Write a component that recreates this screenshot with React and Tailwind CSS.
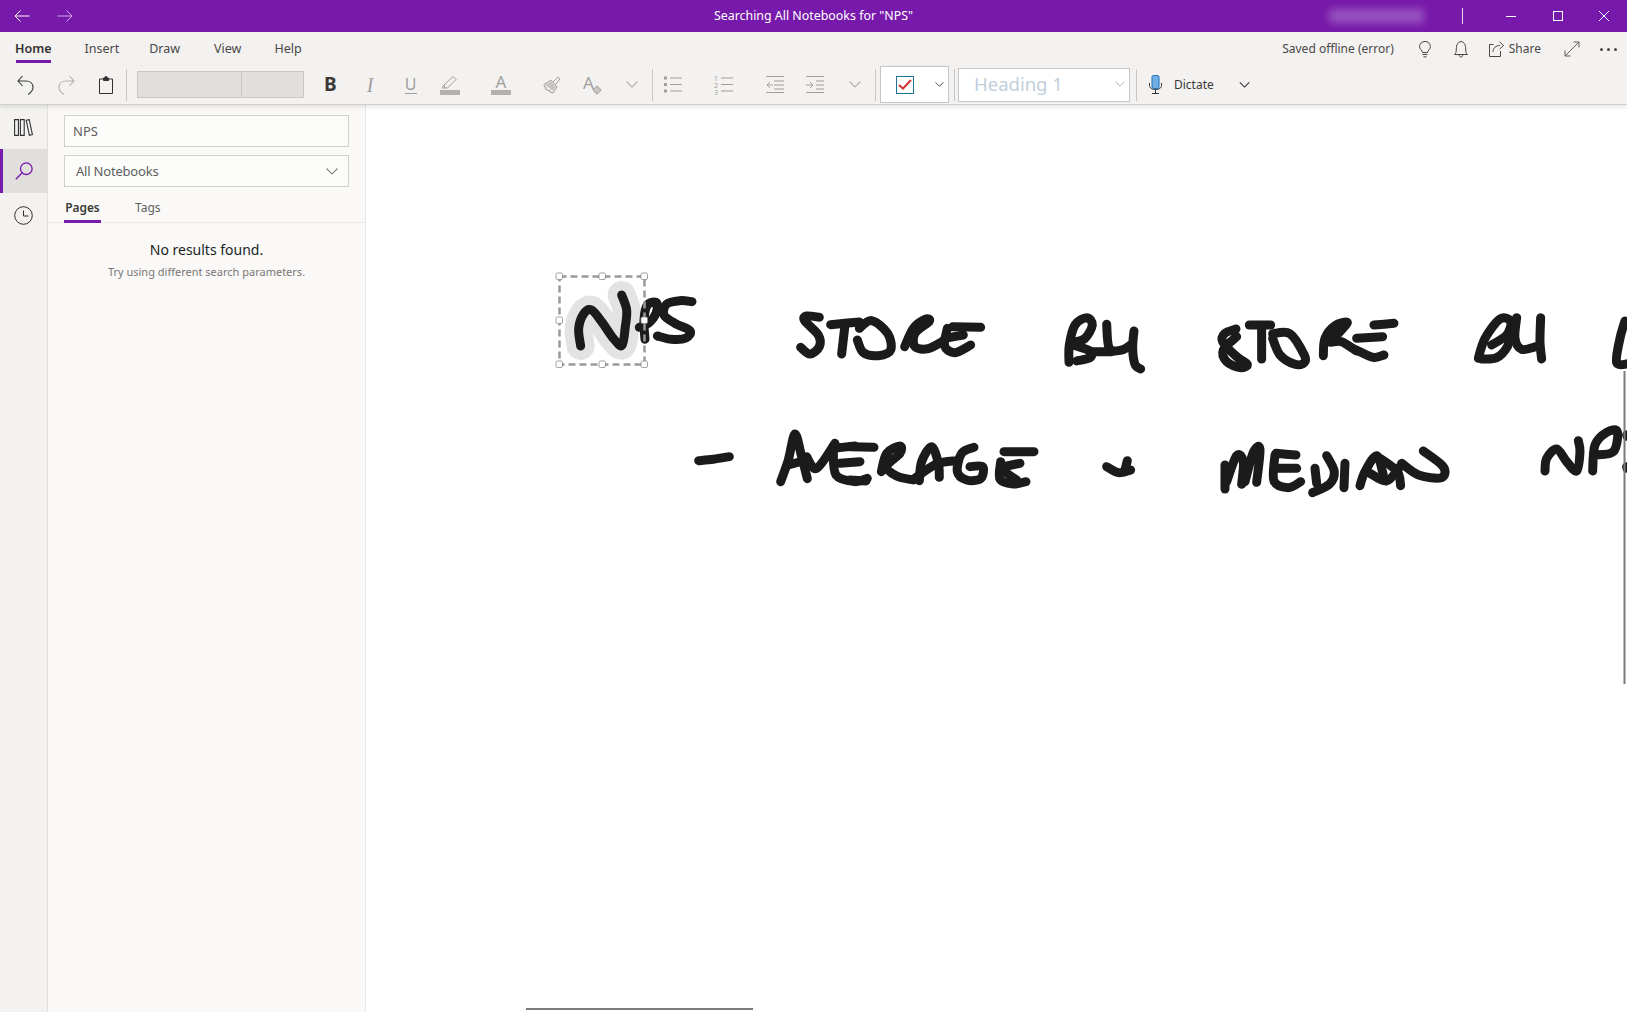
import React from 'react';

// pen stroke through a list of points (catmull-rom)
const smooth = (pts) => {
    let d = `M${pts[0][0]} ${pts[0][1]}`;
    for (let i = 0; i < pts.length - 1; i++) {
        const p0 = pts[i - 1] || pts[i];
        const p1 = pts[i];
        const p2 = pts[i + 1];
        const p3 = pts[i + 2] || p2;
        d += ` C${p1[0] + (p2[0] - p0[0]) / 6} ${p1[1] + (p2[1] - p0[1]) / 6} ${p2[0] - (p3[0] - p1[0]) / 6} ${p2[1] - (p3[1] - p1[1]) / 6} ${p2[0]} ${p2[1]}`;
    }
    return d;
};

const nStroke = [[122, 258], [116, 205], [132, 160], [155, 150], [185, 185], [220, 235], [246, 256], [256, 200], [260, 150], [245, 105]];

// ink groups are traced at 3x, from the given page origin
const inkGroups = [
    {
        x: 540, y: 260, w: 27,
        strokes: [
            nStroke,
            // P
            [[315, 238], [312, 180], [322, 135], [350, 128], [348, 160], [325, 190], [298, 202]],
            // S
            [[456, 125], [420, 122], [380, 132], [372, 165], [405, 190], [450, 212], [438, 234], [395, 238], [352, 228]],
            // STORE
            [[838, 172], [800, 168], [794, 182], [835, 225], [838, 260], [810, 282], [782, 262]],
            [[872, 194], [958, 186]],
            [[915, 195], [905, 282]],
            // dash
            [[476, 602], [520, 598], [568, 590]],
            // AVE
            [[722, 665], [745, 600], [765, 522], [785, 590], [802, 656]],
            [[745, 615], [800, 600]],
            [[800, 590], [830, 625], [885, 550]],
            [[880, 565], [945, 558]],
            [[880, 570], [888, 645], [945, 665], [982, 655]],
            [[900, 610], [960, 605]],
        ],
    },
    {
        x: 850, y: 290, w: 27,
        strokes: [
            // ORE
            [[28, 115], [65, 92], [113, 130], [122, 180], [85, 197], [40, 188], [22, 150]],
            [[164, 170], [190, 115], [225, 88], [238, 94], [195, 130], [195, 170], [235, 176], [285, 150]],
            [[308, 110], [392, 112]],
            [[292, 115], [284, 168], [315, 188], [362, 165]],
            [[285, 145], [340, 135]],
            // RAGE
            [[0, 470], [72, 472]],
            [[0, 570], [48, 573]],
            [[94, 545], [110, 490], [150, 468], [150, 490], [110, 530], [140, 558], [190, 570]],
            [[208, 572], [215, 515], [245, 470], [265, 520], [268, 562]],
            [[190, 568], [260, 522], [320, 512]],
            [[372, 472], [335, 490], [322, 545], [350, 570], [392, 566], [398, 530], [360, 530]],
            [[462, 485], [552, 485]],
            [[452, 515], [450, 568], [490, 582], [528, 575]],
            [[460, 530], [510, 520]],
            [[470, 550], [500, 570]],
        ],
    },
    {
        x: 1040, y: 295, w: 27,
        strokes: [
            // BY
            [[87, 202], [88, 150], [105, 90], [140, 68], [157, 90], [135, 130], [100, 142]],
            [[100, 150], [150, 168], [150, 188], [110, 198]],
            [[150, 170], [215, 170]],
            [[200, 88], [208, 160], [245, 165], [272, 150]],
            [[282, 108], [278, 160], [285, 208], [302, 222]],
            // STORE
            [[588, 102], [555, 115], [548, 140], [590, 185], [622, 208], [600, 218], [560, 200], [550, 165], [590, 125]],
            [[628, 90], [692, 90]],
            [[665, 95], [665, 192]],
            [[698, 116], [750, 116], [793, 180], [793, 203], [765, 208], [720, 180], [698, 130]],
            [[850, 182], [855, 130], [885, 92], [922, 82], [900, 110], [870, 140], [905, 140], [950, 168]],
            [[1002, 90], [1062, 85]],
            [[950, 130], [1028, 125]],
            [[950, 165], [1000, 187], [1032, 180]],
            // plus
            [[200, 515], [235, 533], [272, 525]],
            [[262, 497], [255, 525]],
            // MEDIAN
            [[555, 510], [555, 582]],
            [[560, 560], [590, 482], [610, 500], [605, 568]],
            [[615, 560], [640, 472], [660, 462], [650, 562]],
            [[708, 475], [768, 480]],
            [[705, 480], [702, 558], [745, 578], [782, 560]],
            [[710, 520], [770, 520]],
            [[825, 520], [830, 565]],
            [[860, 482], [883, 530], [868, 568], [818, 593]],
            [[915, 505], [912, 578]],
            [[960, 572], [975, 530], [1010, 482], [1030, 540]],
            [[1082, 572], [1072, 530], [1020, 490]],
            [[990, 535], [1040, 558], [1080, 515]],
            [[1150, 468], [1210, 515], [1204, 548], [1136, 540], [1085, 505]],
        ],
    },
    {
        x: 1400, y: 295, w: 27,
        strokes: [
            [[235, 190], [255, 130], [300, 72], [332, 80], [320, 120], [275, 150]],
            [[245, 192], [290, 188], [322, 155], [330, 120]],
            [[350, 68], [345, 130], [365, 163], [408, 155]],
            [[422, 68], [420, 140], [425, 192]],
            [[675, 78], [660, 130], [650, 203], [685, 206]],
            // NP
            [[435, 528], [440, 490], [470, 462], [500, 500], [530, 528], [540, 470], [535, 437]],
            [[578, 528], [585, 450], [620, 412], [652, 410], [640, 470], [585, 480]],
            [[680, 420], [681, 424]],
            [[680, 515], [681, 520]],
        ],
    },
];

const handles = [[559, 276], [602, 276], [644, 276], [559, 320], [644, 320], [559, 364], [602, 364], [644, 364]];

const Chevron = ({ className, color = '#a19f9d' }) => (
    <svg viewBox="0 0 12 7" className={className} fill="none" stroke={color} strokeWidth="1.2">
        <path d="M.5 .5 6 6l5.500-5.500" />
    </svg>
);

const Divider = ({ className }) => <div className={`w-px h-[32px] bg-[#c8c6c4] ${className}`} />;

const RibbonTab = ({ label, active, className }) => (
    <div className={`relative h-full flex items-center ${className}`}>
        <span className={`text-[12.5px] ${active ? 'font-semibold text-[#323130]' : 'text-[#4a4846]'}`}>{label}</span>
        {active && <div className="absolute left-px right-0 bottom-[3px] h-[3px] bg-[#7719aa]" />}
    </div>
);

const ColorBar = ({ className }) => <div className={`absolute left-0 bottom-0 w-[20px] h-[5px] bg-[#b3b0ad] ${className}`} />;

const App = () => {
    return (
        <div className="flex flex-col w-full h-screen overflow-hidden bg-white font-['Noto_Sans',sans-serif]">
            {/* Title bar */}
            <div className="grid grid-cols-[1fr_auto_1fr] items-center h-[32px] bg-[#7719aa] shrink-0 text-white">
                <div className="flex items-center pl-[14px]">
                    <svg viewBox="0 0 16 12" className="w-[16px] h-[12px]" fill="none" stroke="#fff" strokeWidth="1">
                        <path d="M15.500 6H1M6.500.5 1 6l5.500 5.500" />
                    </svg>
                    <svg viewBox="0 0 16 12" className="w-[16px] h-[12px] ml-[27px]" fill="none" stroke="#cfa8e3" strokeWidth="1">
                        <path d="M.5 6H15M9.500.5 15 6l-5.500 5.500" />
                    </svg>
                </div>
                <div className="text-[12.4px]">Searching All Notebooks for "NPS"</div>
                <div className="flex items-center justify-end">
                    <div className="w-[95px] h-[14px] bg-white/25 blur-[4px] mr-[38px]" />
                    <div className="w-px h-[16px] bg-[#e7d6f0] mr-[43px]" />
                    <div className="w-[10px] h-px bg-white mr-[37px]" />
                    <div className="w-[10px] h-[10px] border border-white mr-[36px]" />
                    <svg viewBox="0 0 10 10" className="w-[10px] h-[10px] mr-[18px]" fill="none" stroke="#fff" strokeWidth="1">
                        <path d="M0 0l10 10M10 0 0 10" />
                    </svg>
                </div>
            </div>

            {/* Ribbon tabs */}
            <div className="flex items-center h-[34px] bg-[#f3f2f1] shrink-0 text-[#4a4846]">
                <RibbonTab label="Home" active className="ml-[15px]" />
                <RibbonTab label="Insert" className="ml-[33px]" />
                <RibbonTab label="Draw" className="ml-[30px]" />
                <RibbonTab label="View" className="ml-[34px]" />
                <RibbonTab label="Help" className="ml-[33px]" />
                <div className="flex items-center ml-auto">
                    <span className="text-[12px]">Saved offline (error)</span>
                    <svg viewBox="0 0 12 17" className="w-[12px] h-[17px] ml-[25px]" fill="none" stroke="#4a4846" strokeWidth="1">
                        <path d="M3.500 11.500C3 9 .6 8.400.6 5.600a5.400 5.200 0 0 1 10.800 0c0 2.800-2.400 3.400-2.900 5.900zM3.500 13.500h5M4.500 15.800h3" />
                    </svg>
                    <svg viewBox="0 0 14 17" className="w-[14px] h-[17px] ml-[23px]" fill="none" stroke="#4a4846" strokeWidth="1">
                        <path d="M.5 13.500c1.200-1 1.800-2 1.800-5.500C2.300 3.500 4.200.6 7 .6s4.700 2.900 4.700 7.400c0 3.500.6 4.500 1.800 5.500zM5.200 13.800c0 3 3.600 3 3.600 0" />
                    </svg>
                    <svg viewBox="0 0 15 16" className="w-[15px] h-[16px] ml-[21px]" fill="none" stroke="#4a4846" strokeWidth="1">
                        <path d="M4.500 3.500H.5v12h11V10M4 11c0-4 3-6.500 7-6.500M10.500.8 14.500 4.500l-4 3.700" />
                    </svg>
                    <span className="text-[12px] ml-[5px]">Share</span>
                    <svg viewBox="0 0 16 16" className="w-[16px] h-[16px] ml-[23px]" fill="none" stroke="#605e5c" strokeWidth="1">
                        <path d="M1 15 15 1M9.500 1H15v5.500M1 9.500V15h5.500" />
                    </svg>
                    <div className="flex gap-[4px] ml-[20px] mr-[10px]">
                        <div className="w-[3px] h-[3px] rounded-full bg-[#4a4846]" />
                        <div className="w-[3px] h-[3px] rounded-full bg-[#4a4846]" />
                        <div className="w-[3px] h-[3px] rounded-full bg-[#4a4846]" />
                    </div>
                </div>
            </div>

            {/* Toolbar */}
            <div className="relative z-10 flex items-center h-[39px] pl-[17px] pb-px bg-[#f3f2f1] shrink-0 border-b border-[#d2d0ce] shadow-[0_2px_4px_rgba(0,0,0,0.10)]">
                <svg viewBox="0 0 17 20" className="w-[17px] h-[20px]" fill="none" stroke="#3b3a39" strokeWidth="1.1">
                    <path d="M5.500 1 1 6l4.500 5M1 6h8c4 0 7 2.500 7 6.500 0 3-2 5-5 7" />
                </svg>
                <svg viewBox="0 0 17 20" className="w-[17px] h-[20px] ml-[24px]" fill="none" stroke="#b3b0ad" strokeWidth="1.1">
                    <path d="M11.500 1 16 6l-4.500 5M16 6H8c-4 0-7 2.500-7 6.500 0 3 2 5 5 7" />
                </svg>
                <svg viewBox="0 0 14 18" className="w-[14px] h-[18px] ml-[24px]" fill="none" stroke="#323130" strokeWidth="1">
                    <path d="M4 3H.5v14.500h13V3H10" />
                    <path d="M4.500 4.500v-2.500h1.500V.8h2v1.200h1.500v2.500z" fill="#323130" />
                </svg>
                <Divider className="ml-[13px]" />
                <div className="flex ml-[10px] w-[167px] h-[27px] border border-[#c8c6c4] bg-[#e1dfdd]">
                    <div className="w-[104px] h-full border-r border-[#c8c6c4]" />
                </div>
                <span className="w-[12px] ml-[20px] text-[19px] leading-none font-bold text-[#3b3a39] text-center">B</span>
                <span className="w-[8px] ml-[30px] text-[20px] leading-none italic text-[#a19f9d] text-center font-['Liberation_Serif',serif]">I</span>
                <div className="flex flex-col items-center w-[11px] ml-[31px]">
                    <span className="text-[16px] leading-[16px] text-[#a19f9d]">U</span>
                    <div className="w-[12px] h-px bg-[#a19f9d] mt-px" />
                </div>
                <div className="relative w-[20px] h-[20px] ml-[24px]">
                    <svg viewBox="0 0 20 14" className="w-[20px] h-[14px]" fill="none" stroke="#a19f9d" strokeWidth="1">
                        <path d="M5 13l-1-3L13 1.500l3 3L7.500 13zM4 10l-2 3h3" />
                    </svg>
                    <ColorBar />
                </div>
                <div className="relative w-[20px] h-[20px] ml-[31px]">
                    <span className="absolute inset-x-0 -top-[4px] text-center text-[17px] leading-[22px] text-[#a19f9d]">A</span>
                    <ColorBar />
                </div>
                <svg viewBox="0 0 18 18" className="w-[18px] h-[18px] ml-[32px]" fill="none" stroke="#a19f9d" strokeWidth="1">
                    <path d="M1 8.500 8 4l6 7-4 6-3-1-1-2-1 1-1.500-2-1 .5L3 11.500 1.500 11zM10 6l5-5 2 2-4.500 5.500" />
                    <path d="M2 9l6-4 5 6-3 4z" fill="#c8c6c4" stroke="none" />
                </svg>
                <div className="relative w-[19px] h-[20px] ml-[22px]">
                    <span className="absolute left-0 -top-[3px] text-[17px] leading-[22px] text-[#a19f9d]">A</span>
                    <svg viewBox="0 0 10 10" className="absolute right-0 bottom-0 w-[10px] h-[10px]" fill="#c8c6c4" stroke="#a19f9d" strokeWidth="1">
                        <path d="M.8 5 5 .8 9.200 5 5 9.200z" />
                    </svg>
                </div>
                <Chevron className="w-[12px] h-[7px] ml-[24px]" color="#b3b0ad" />
                <Divider className="ml-[14px]" />
                <svg viewBox="0 0 18 17" className="w-[18px] h-[17px] ml-[11px]" fill="none" stroke="#a19f9d">
                    <path d="M6 2h12M6 8.500h12M6 15h12" />
                    <path d="M0 .5h3v3H0zM0 7h3v3H0zM0 13.500h3v3H0z" fill="#a19f9d" stroke="none" />
                </svg>
                <div className="relative w-[19px] h-[19px] ml-[32px]">
                    <div className="absolute left-0 top-0 flex flex-col text-[7px] leading-[7px] text-[#a19f9d]">
                        <span>1</span>
                        <span>2</span>
                        <span>3</span>
                    </div>
                    <svg viewBox="0 0 12 17" className="absolute right-0 top-[1px] w-[12px] h-[17px]" fill="none" stroke="#a19f9d">
                        <path d="M0 2h12M0 8.500h12M0 15h12" />
                    </svg>
                </div>
                <svg viewBox="0 0 18 17" className="w-[18px] h-[17px] ml-[33px]" fill="none" stroke="#a19f9d">
                    <path d="M0 .5h18M8 5h10M8 9h10M8 13h10M0 16.500h18M7 9H1M4 6 1 9l3 3" />
                </svg>
                <svg viewBox="0 0 18 17" className="w-[18px] h-[17px] ml-[22px]" fill="none" stroke="#a19f9d">
                    <path d="M0 .5h18M10 5h8M10 9h8M10 13h8M0 16.500h18M0 9h7M4 6l3 3-3 3" />
                </svg>
                <Chevron className="w-[12px] h-[7px] ml-[25px]" color="#b3b0ad" />
                <Divider className="ml-[14px]" />
                <div className="flex items-center w-[69px] h-[37px] ml-[4px] pl-[15px] border border-[#c8c6c4] bg-white">
                    <div className="flex items-center justify-center w-[18px] h-[18px] border border-[#1c7396]">
                        <svg viewBox="0 0 14 11" className="w-[14px] h-[11px]" fill="none" stroke="#d13438" strokeWidth="2">
                            <path d="M1 6l4 3.500L13 1" />
                        </svg>
                    </div>
                    <Chevron className="w-[9px] h-[5px] ml-[21px]" color="#323130" />
                </div>
                <Divider className="ml-[5px]" />
                <div className="flex items-center w-[172px] h-[34px] ml-[3px] pl-[15px] pb-px border border-[#c8c6c4] bg-white">
                    <span className="text-[18.5px] text-[#c1cfdc]">Heading 1</span>
                    <Chevron className="w-[10px] h-[6px] ml-auto mr-[4px]" color="#b3b0ad" />
                </div>
                <Divider className="ml-[6px]" />
                <svg viewBox="0 0 13 19" className="w-[13px] h-[19px] ml-[12px]" fill="none" stroke="#323130" strokeWidth="1">
                    <path d="M.5 8v2.500c0 2.500 2.500 4 6 4s6-1.500 6-4V8M6.500 14.500v4M3 18.500h7" />
                    <rect x="3" y=".5" width="7" height="13" rx="1.500" fill="#72aee6" stroke="#1a6fb5" />
                </svg>
                <span className="w-[40px] ml-[12px] text-[12px] text-[#3b3a39] whitespace-nowrap">Dictate</span>
                <Chevron className="w-[11px] h-[6px] ml-[25px]" color="#323130" />
            </div>

            <div className="flex flex-1 min-h-0">
                {/* Side rail */}
                <div className="flex flex-col w-[48px] bg-[#f3f2f1] border-r border-[#e1dfdd] shrink-0">
                    <div className="flex items-center justify-center h-[44px]">
                        <svg viewBox="0 0 19 17" className="w-[19px] h-[17px]" fill="none" stroke="#323130" strokeWidth="1.1">
                            <path d="M.6.6h3.800v15.800H.6zM6.400.6h3.800v15.800H6.400zM12.200 1.200l3-.6L18.400 15.500l-3 .8z" />
                        </svg>
                    </div>
                    <div className="flex items-center justify-center h-[44px] bg-[#e1dfdd] border-l-[3px] border-[#7719aa] pr-[3px]">
                        <svg viewBox="0 0 18 18" className="w-[18px] h-[18px]" fill="none" stroke="#7719aa" strokeWidth="1.3">
                            <circle cx="11.300" cy="6.700" r="5.800" />
                            <path d="M7 11 .8 17.200" />
                        </svg>
                    </div>
                    <div className="flex items-center justify-center h-[44px]">
                        <svg viewBox="0 0 19 19" className="w-[19px] h-[19px]" fill="none" stroke="#323130" strokeWidth="1">
                            <circle cx="9.500" cy="9.500" r="8.800" />
                            <path d="M9.500 4.500v5.500h5" />
                        </svg>
                    </div>
                </div>

                {/* Search panel */}
                <div className="flex flex-col w-[318px] pt-[10px] bg-[#faf9f8] border-r border-[#e8e6e4] shrink-0">
                    <div className="mx-[16px] h-[32px] flex items-center px-[8px] pt-px border border-[#d2d0ce] bg-[#fcfcfb] text-[13px] text-[#605e5c]">NPS</div>
                    <div className="mx-[16px] mt-[8px] h-[32px] flex items-center pl-[11px] pr-[10px] pt-px border border-[#d2d0ce] bg-[#fcfcfb] text-[13px] text-[#605e5c] tracking-[-0.2px]">
                        All Notebooks
                        <Chevron className="w-[12px] h-[7px] ml-auto" color="#8a8886" />
                    </div>
                    <div className="flex h-[36px] border-b border-[#edebe9] pl-[16px]">
                        <div className="relative flex items-center justify-center w-[37px] h-[36px] pt-[6px]">
                            <span className="text-[12px] font-semibold text-[#3b3a39] tracking-[-0.1px]">Pages</span>
                            <div className="absolute inset-x-0 bottom-0 h-[3px] bg-[#7719aa]" />
                        </div>
                        <span className="flex items-center ml-[34px] h-full pt-[6px] text-[12px] text-[#605e5c]">Tags</span>
                    </div>
                    <div className="mt-[16px] text-center text-[14px] leading-[22px] text-[#201f1e]">No results found.</div>
                    <div className="mt-[3px] text-center text-[11px] leading-[16px] text-[#797775]">Try using different search parameters.</div>
                </div>

                {/* Page canvas with the ink */}
                <div className="relative flex-1 bg-white overflow-hidden">
                    <svg viewBox="366 105 1261 907" className="absolute inset-0 w-full h-full" fill="none" preserveAspectRatio="xMinYMin slice">
                        <path d={smooth(nStroke)} transform="translate(540 260) scale(0.3333)" stroke="#e3e3e3" strokeWidth="84" strokeLinecap="round" strokeLinejoin="round" />
                        {inkGroups.map((group, i) => (
                            <g key={i} transform={`translate(${group.x} ${group.y}) scale(0.3333)`} stroke="#1b1b1b" strokeWidth={group.w} strokeLinecap="round" strokeLinejoin="round">
                                {group.strokes.map((pts, j) => <path key={j} d={smooth(pts)} />)}
                            </g>
                        ))}
                        <rect x="559.5" y="276.5" width="85" height="88" stroke="#999" strokeWidth="2.5" strokeDasharray="7 4" />
                        {handles.map(([x, y]) => (
                            <rect key={`${x}-${y}`} x={x - 3} y={y - 3} width="6.5" height="6.5" rx="1.5" fill="#fff" stroke="#8a8a8a" strokeWidth="0.8" />
                        ))}
                        <path d="M1624.5 371V684" stroke="#7a7a7a" strokeWidth="2" />
                        <path d="M526 1009H753" stroke="#7a7a7a" strokeWidth="2" />
                    </svg>
                </div>
            </div>
        </div>
    );
};

export default App;
